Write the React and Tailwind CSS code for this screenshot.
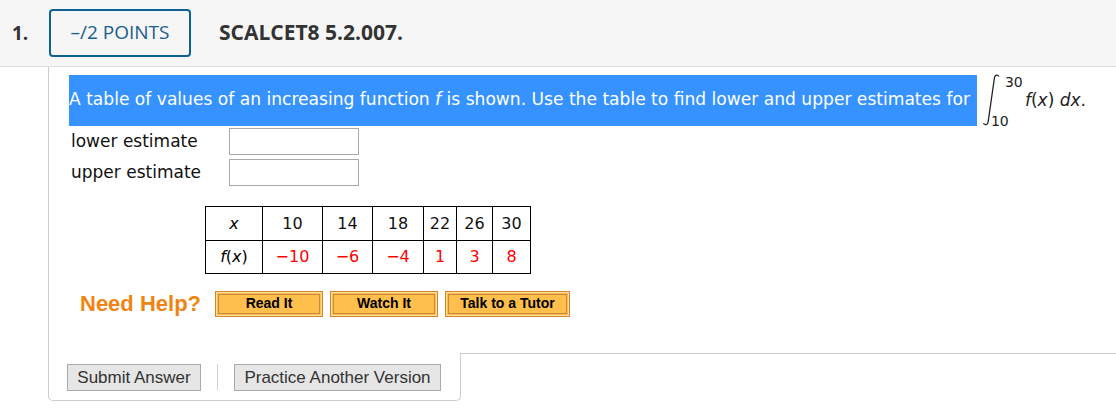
import React from 'react';

const xs = ['10', '14', '18', '22', '26', '30'];
const fx = ['\u221210', '\u22126', '\u22124', '1', '3', '8'];
const colW = ['w-[57px]', 'w-[60px]', 'w-[50px]', 'w-[51px]', 'w-[33px]', 'w-[36px]', 'w-[38px]'];

const HelpButton = ({ label, width }) => (
  <button
    className={`${width} h-[26px] border border-[#d9822b] bg-[#ffbf4d] p-[2px] shadow-[inset_0_0_0_1px_#ffe0a0]`}
  >
    <span className="flex h-full items-center justify-center border border-[#c98a3a] text-[14px] font-bold text-black">
      {label}
    </span>
  </button>
);

const App = () => {
  return (
    <div className="w-[1116px] h-[415px] bg-white overflow-hidden font-['DejaVu_Sans',Verdana,sans-serif]">
      {/* Header */}
      <div className="h-[67px] bg-[#f6f6f6] border-b border-[#dedede] flex items-center font-['Open_Sans',sans-serif]">
        <div className="w-[49px] pl-[12px] text-[19px] font-bold text-[#333]">1.</div>
        <div className="w-[142px] h-[48px] border-2 border-[#0e6196] rounded-[4px] flex items-center justify-center text-[19px] text-[#1a5d8c] mb-[1px]">
          –/2 POINTS
        </div>
        <div className="ml-[28px] text-[21px] font-bold text-[#333]">SCALCET8 5.2.007.</div>
      </div>

      <div className="ml-[48px]">
        {/* Question body */}
        <div className="border-l border-[#cccccc] pl-[20px] pt-[7px] h-[286px]">
          <div className="flex items-center h-[52px]">
            <span className="h-[51px] flex items-center bg-[#3592fe] text-white text-[17.1px] pr-[7px]">
              A table of values of an increasing function&nbsp;<i>f</i>&nbsp;is shown. Use the table to find lower and upper estimates for
            </span>
            <span className="relative flex items-center h-[52px] ml-[4px] text-[#222] text-[17px]">
              <svg width="20" height="54" viewBox="0 0 20 54" className="block">
                <path d="M18 3.5 C16.5 1.2 14 1.6 13.4 5 L7.2 48.5 C6.8 52 4.3 52.5 2.3 50.4" fill="none" stroke="#222" strokeWidth="1.3" />
              </svg>
              <span className="absolute left-[24px] top-[1px] text-[14px] leading-none">30</span>
              <span className="absolute left-[10px] bottom-[-2px] text-[14px] leading-none">10</span>
              <span className="ml-[24px] mt-[2px]"><i>f</i>(<i>x</i>) <i>dx</i>.</span>
            </span>
          </div>

          <div className="mt-[2px] flex flex-col gap-[4px] text-[17px] text-[#111]">
            <div className="flex items-center h-[27px]">
              <span className="w-[160px] pl-[2px]">lower estimate</span>
              <input className="w-[130px] h-[27px] border border-[#aaaaaa] bg-white" />
            </div>
            <div className="flex items-center h-[27px]">
              <span className="w-[160px] pl-[2px]">upper estimate</span>
              <input className="w-[130px] h-[27px] border border-[#aaaaaa] bg-white" />
            </div>
          </div>

          <table className="ml-[136px] mt-[20px] border-collapse text-[16px]">
            <tbody>
              <tr className="h-[34px]">
                <td className={`${colW[0]} border border-black text-center`}><i>x</i></td>
                {xs.map((v, i) => (
                  <td key={v} className={`${colW[i + 1]} border border-black text-center text-[#111]`}>{v}</td>
                ))}
              </tr>
              <tr className="h-[33px]">
                <td className="border border-black text-center"><i>f</i>(<i>x</i>)</td>
                {fx.map((v) => (
                  <td key={v} className="border border-black text-center text-[#ff0000]">{v}</td>
                ))}
              </tr>
            </tbody>
          </table>

          <div className="flex items-center mt-[13px] font-['Liberation_Sans',Arial,sans-serif]">
            <span className="ml-[11px] w-[135px] text-[22px] font-bold text-[#f08413]">Need Help?</span>
            <div className="flex gap-[7px]">
              <HelpButton label="Read It" width="w-[108px]" />
              <HelpButton label="Watch It" width="w-[108px]" />
              <HelpButton label="Talk to a Tutor" width="w-[125px]" />
            </div>
          </div>
        </div>

        {/* Action bar */}
        <div className="flex">
          <div className="w-[413px] h-[48px] border-l border-r border-b border-[#cccccc] rounded-b-[5px] flex items-center pl-[18px] pt-[1px] font-['Liberation_Sans',Arial,sans-serif]">
            <button className="h-[27px] w-[134px] border border-[#aaaaaa] bg-[#e6e6e6] text-[17px] text-[#333]">Submit Answer</button>
            <span className="mx-[16px] h-[26px] border-l border-[#d0d0d0]"></span>
            <button className="h-[27px] w-[207px] border border-[#aaaaaa] bg-[#e6e6e6] text-[17px] text-[#333]">Practice Another Version</button>
          </div>
          <div className="flex-1 border-t border-[#cccccc]"></div>
        </div>
      </div>
    </div>
  );
};

export default App;
